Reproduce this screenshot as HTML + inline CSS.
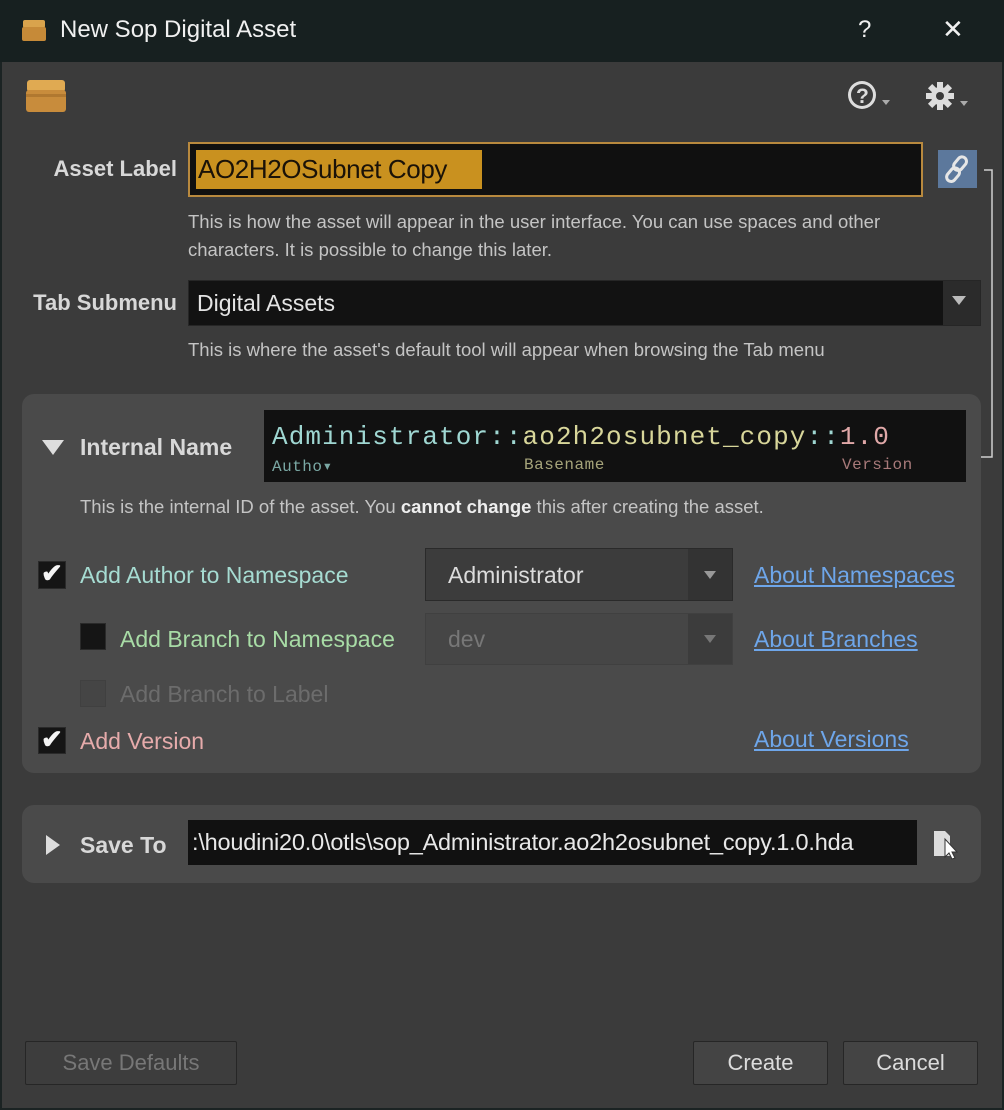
<!DOCTYPE html>
<html><head><meta charset="utf-8"><style>
*{margin:0;padding:0;box-sizing:border-box}
body{width:1004px;height:1110px;background:#1b2323;font-family:"Liberation Sans",sans-serif;overflow:hidden;position:relative}
.a{position:absolute;white-space:nowrap}
.win{position:absolute;left:2px;top:62px;width:1000px;height:1046px;background:#3b3b3b}
.lbl{font-size:22px;color:#d8d8d8;font-weight:bold}
.help{font-size:18.5px;color:#c4c4c4}
.t{font-size:23px}
.link{color:#6ea6ea;text-decoration:underline;font-size:23px}
.cb{position:absolute;background:#151515;border:1px solid #2a2a2a}
.btn{position:absolute;background:#444;border:1px solid #262626;border-radius:2px;color:#dcdcdc;font-size:22px;text-align:center}
</style></head><body>
<div class="a" style="left:0;top:0;width:1004px;height:62px;background:#172020"></div>
<svg class="a" style="left:20px;top:18px" width="28" height="26" viewBox="0 0 28 26"><rect x="3" y="2" width="22" height="8" rx="2" fill="#d9a34c"/><rect x="2" y="9" width="24" height="14" rx="2" fill="#c68a38"/></svg>
<div class="a" style="left:60px;top:16px;font-size:24px;color:#f0f0f0">New Sop Digital Asset</div>
<div class="a" style="left:858px;top:16px;font-size:24px;color:#f0f0f0">?</div>
<div class="a" style="left:942px;top:14px;font-size:26px;color:#f0f0f0">✕</div>
<div class="win"></div>
<svg class="a" style="left:24px;top:78px" width="44" height="36" viewBox="0 0 44 36"><rect x="3" y="2" width="38" height="12" rx="3" fill="#e0aa52"/><rect x="2" y="12" width="40" height="22" rx="3" fill="#c88c3c"/><rect x="2" y="16" width="40" height="3" fill="#b07830"/></svg>
<svg class="a" style="left:845px;top:78px" width="50" height="36"><circle cx="17" cy="17" r="14" fill="#ddd"/><circle cx="17" cy="17" r="11" fill="#3b3b3b"/><text x="11" y="25" font-size="21" font-weight="bold" fill="#ddd" font-family="Liberation Sans">?</text><path d="M37 22h8l-4 5z" fill="#aaa"/></svg>
<svg class="a" style="left:924px;top:80px" width="50" height="34"><g fill="#ddd"><circle cx="16" cy="16" r="9"/><rect x="13" y="2" width="6" height="28"/><rect x="2" y="13" width="28" height="6"/><rect x="13" y="2" width="6" height="28" transform="rotate(45 16 16)"/><rect x="13" y="2" width="6" height="28" transform="rotate(-45 16 16)"/></g><circle cx="16" cy="16" r="4" fill="#3b3b3b"/><path d="M36 21h8l-4 5z" fill="#aaa"/></svg>

<div class="a lbl" style="right:827px;top:156px">Asset Label</div>
<div class="a" style="left:188px;top:142px;width:735px;height:55px;background:#101010;border:2px solid #b8893e"></div>
<div class="a" style="left:196px;top:150px;width:286px;height:39px;background:#c9911f"></div>
<div class="a" style="left:198px;top:154px;font-size:26px;color:#1a1208;letter-spacing:-0.4px">AO2H2OSubnet Copy</div>
<div class="a" style="left:938px;top:150px;width:39px;height:38px;background:#5c789c"></div>
<svg class="a" style="left:938px;top:150px" width="39" height="38"><g fill="none" stroke="#e6e6e6" stroke-width="3"><rect x="18" y="6" width="9" height="15" rx="4.5" transform="rotate(40 22 13)"/><rect x="11" y="17" width="9" height="15" rx="4.5" transform="rotate(40 15 24)"/></g></svg>
<svg class="a" style="left:960px;top:160px" width="40" height="300"><path d="M24 10h8v287h-24M16 292l-7 5 7 5" fill="none" stroke="#cfcfcf" stroke-width="1.5"/></svg>
<div class="a help" style="left:188px;top:211px">This is how the asset will appear in the user interface. You can use spaces and other</div>
<div class="a help" style="left:188px;top:239px">characters. It is possible to change this later.</div>

<div class="a lbl" style="right:827px;top:290px">Tab Submenu</div>
<div class="a" style="left:188px;top:280px;width:793px;height:46px;background:#121212;border:1px solid #262626"></div>
<div class="a" style="left:943px;top:281px;width:37px;height:44px;background:#2b2b2b"></div>
<div class="a" style="left:952px;top:296px;width:0;height:0;border-left:7px solid transparent;border-right:7px solid transparent;border-top:9px solid #bbb"></div>
<div class="a t" style="left:197px;top:290px;color:#e4e4e4">Digital Assets</div>
<div class="a help" style="left:188px;top:339px">This is where the asset's default tool will appear when browsing the Tab menu</div>

<div class="a" style="left:22px;top:394px;width:959px;height:379px;background:#4a4a4a;border-radius:12px"></div>
<div class="a" style="left:42px;top:440px;width:0;height:0;border-left:11px solid transparent;border-right:11px solid transparent;border-top:15px solid #ddd"></div>
<div class="a lbl" style="left:80px;top:434px;font-size:23px">Internal Name</div>
<div class="a" style="left:264px;top:410px;width:702px;height:72px;background:#111"></div>
<div class="a" style="left:272px;top:422px;font-family:'Liberation Mono',monospace;font-size:26px;letter-spacing:1.1px;color:#9fd7d2">Administrator::<span style="color:#d8d69a">ao2h2osubnet_copy</span>::<span style="color:#e0a8a8">1.0</span></div>
<div class="a" style="left:272px;top:456px;font-family:'Liberation Mono',monospace;font-size:16px;letter-spacing:0.5px;color:#7aa8a4">Autho▾</div>
<div class="a" style="left:524px;top:456px;font-family:'Liberation Mono',monospace;font-size:16px;letter-spacing:0.5px;color:#a6a47a">Basename</div>
<div class="a" style="left:842px;top:456px;font-family:'Liberation Mono',monospace;font-size:16px;letter-spacing:0.5px;color:#a87a7a">Version</div>
<div class="a help" style="left:80px;top:496px">This is the internal ID of the asset. You <b style="color:#eee">cannot change</b> this after creating the asset.</div>

<div class="cb" style="left:38px;top:561px;width:28px;height:28px"></div>
<div class="a" style="left:41px;top:558px;font-size:26px;color:#f4f4f4;font-weight:bold">✔</div>
<div class="a t" style="left:80px;top:562px;color:#a6dcd2">Add Author to Namespace</div>
<div class="a" style="left:425px;top:548px;width:308px;height:53px;background:#3c3c3c;border:1px solid #2a2a2a"></div>
<div class="a" style="left:688px;top:549px;width:44px;height:51px;background:#333"></div>
<div class="a" style="left:704px;top:571px;border-left:6px solid transparent;border-right:6px solid transparent;border-top:8px solid #999"></div>
<div class="a t" style="left:448px;top:562px;color:#dcdcdc">Administrator</div>
<div class="a link" style="left:754px;top:562px">About Namespaces</div>

<div class="cb" style="left:80px;top:623px;width:26px;height:27px"></div>
<div class="a t" style="left:120px;top:626px;color:#a8dca6">Add Branch to Namespace</div>
<div class="a" style="left:425px;top:613px;width:308px;height:52px;background:#464646;border:1px solid #404040"></div>
<div class="a" style="left:688px;top:614px;width:44px;height:50px;background:#3c3c3c"></div>
<div class="a" style="left:704px;top:635px;border-left:6px solid transparent;border-right:6px solid transparent;border-top:8px solid #777"></div>
<div class="a t" style="left:448px;top:626px;color:#777">dev</div>
<div class="a link" style="left:754px;top:626px">About Branches</div>

<div class="a" style="left:80px;top:680px;width:26px;height:27px;background:#454545;border:1px solid #404040"></div>
<div class="a t" style="left:120px;top:681px;color:#6c6c6c">Add Branch to Label</div>

<div class="cb" style="left:38px;top:727px;width:28px;height:27px"></div>
<div class="a" style="left:41px;top:724px;font-size:26px;color:#f4f4f4;font-weight:bold">✔</div>
<div class="a t" style="left:80px;top:728px;color:#e6abab">Add Version</div>
<div class="a link" style="left:754px;top:726px">About Versions</div>

<div class="a" style="left:22px;top:805px;width:959px;height:78px;background:#4a4a4a;border-radius:12px"></div>
<div class="a" style="left:46px;top:835px;border-top:10px solid transparent;border-bottom:10px solid transparent;border-left:14px solid #ddd"></div>
<div class="a lbl" style="left:80px;top:832px;font-size:23px">Save To</div>
<div class="a" style="left:188px;top:820px;width:729px;height:45px;background:#111;overflow:hidden"></div>
<div class="a" style="left:192px;top:829px;font-size:23.5px;color:#e8e8e8;letter-spacing:-0.2px">:\houdini20.0\otls\sop_Administrator.ao2h2osubnet_copy.1.0.hda</div>
<svg class="a" style="left:931px;top:829px" width="30" height="32"><path d="M3 2h11l5 5v20H3z" fill="#ddd"/><path d="M14 10v18l4-4 3 6 3-1-3-6h5z" fill="#fff" stroke="#333"/></svg>

<div class="btn" style="left:25px;top:1041px;width:212px;height:44px;line-height:42px;background:#3d3d3d;color:#777">Save Defaults</div>
<div class="btn" style="left:693px;top:1041px;width:135px;height:44px;line-height:42px">Create</div>
<div class="btn" style="left:843px;top:1041px;width:135px;height:44px;line-height:42px">Cancel</div>
</body></html>
